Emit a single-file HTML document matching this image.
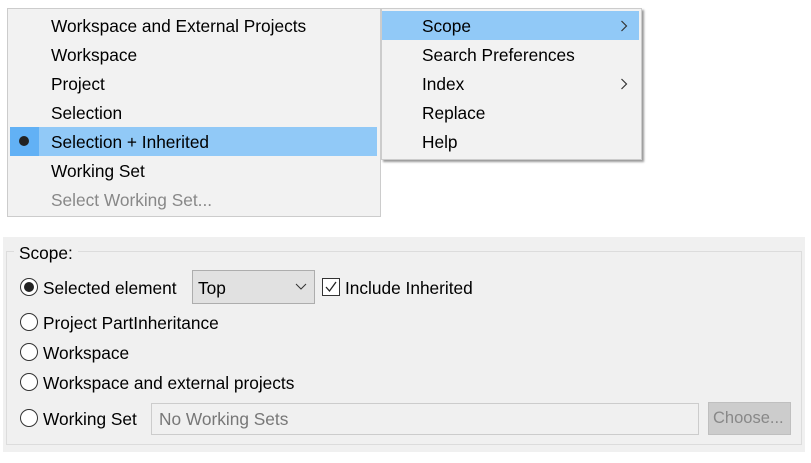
<!DOCTYPE html>
<html><head><style>
body{margin:0;width:811px;height:463px;background:#fff;position:relative;overflow:hidden;font-family:"Liberation Sans",sans-serif;font-size:17.3px;color:#000}
.a{position:absolute;white-space:nowrap}
.menu{position:absolute;background:#f2f2f2;border:1px solid #ccc}
.hl{position:absolute;background:#91c9f7}
.radio{position:absolute;width:16px;height:16px;border:1px solid #333;border-radius:50%;background:#fff}
</style></head><body>
<div class="menu" style="left:7px;top:8px;width:372px;height:207px"></div>
<div class="hl" style="left:10px;top:127px;width:367px;height:29px"></div>
<div class="a" style="left:10px;top:127px;width:29px;height:29px;background:#62b1f5"></div>
<div class="a" style="left:19px;top:136px;width:10px;height:10px;border-radius:50%;background:#222"></div>
<div class="a" style="left:51px;top:16px">Workspace and External Projects</div>
<div class="a" style="left:51px;top:45px">Workspace</div>
<div class="a" style="left:51px;top:74px">Project</div>
<div class="a" style="left:51px;top:103px">Selection</div>
<div class="a" style="left:51px;top:132px">Selection + Inherited</div>
<div class="a" style="left:51px;top:161px">Working Set</div>
<div class="a" style="left:51px;top:190px;color:#888">Select Working Set...</div>
<div class="menu" style="left:381px;top:8px;width:259px;height:150px;box-shadow:2px 2px 2px #999"></div>
<div class="hl" style="left:382px;top:11px;width:257px;height:29px"></div>
<div class="a" style="left:422px;top:16px">Scope</div>
<svg class="a" style="left:620px;top:20px" width="8" height="12"><path d="M1.5 1l5 5-5 5" stroke="#333" stroke-width="1.2" fill="none"/></svg>
<div class="a" style="left:422px;top:45px">Search Preferences</div>
<div class="a" style="left:422px;top:74px">Index</div>
<svg class="a" style="left:620px;top:78px" width="8" height="12"><path d="M1.5 1l5 5-5 5" stroke="#333" stroke-width="1.2" fill="none"/></svg>
<div class="a" style="left:422px;top:103px">Replace</div>
<div class="a" style="left:422px;top:132px">Help</div>
<div class="a" style="left:3px;top:237px;width:802px;height:215px;background:#f0f0f0"></div>
<div class="a" style="left:6px;top:251px;width:794px;height:192px;border:1px solid #dcdcdc"></div>
<div class="a" style="left:14px;top:243px;background:#f0f0f0;padding:0 5px">Scope:</div>
<div class="radio" style="left:20px;top:278px"></div>
<div class="a" style="left:24px;top:282px;width:10px;height:10px;border-radius:50%;background:#222"></div>
<div class="a" style="left:43px;top:278px">Selected element</div>
<div class="a" style="left:192px;top:270px;width:121px;height:32px;background:#e1e1e1;border:1px solid #adadad"></div>
<div class="a" style="left:198px;top:278px">Top</div>
<svg class="a" style="left:295px;top:283px" width="12" height="8"><path d="M1 1l5 5 5-5" stroke="#333" fill="none"/></svg>
<div class="a" style="left:322px;top:278px;width:16px;height:16px;border:1px solid #333;background:#fff"></div>
<svg class="a" style="left:323px;top:279px" width="16" height="16"><path d="M3 8l3.5 4L13 3" stroke="#222" stroke-width="1.3" fill="none"/></svg>
<div class="a" style="left:345px;top:278px">Include Inherited</div>
<div class="radio" style="left:20px;top:313px"></div>
<div class="a" style="left:43px;top:313px">Project PartInheritance</div>
<div class="radio" style="left:20px;top:343px"></div>
<div class="a" style="left:43px;top:343px">Workspace</div>
<div class="radio" style="left:20px;top:373px"></div>
<div class="a" style="left:43px;top:373px">Workspace and external projects</div>
<div class="radio" style="left:20px;top:409px"></div>
<div class="a" style="left:43px;top:409px">Working Set</div>
<div class="a" style="left:151px;top:403px;width:546px;height:30px;background:#f0f0f0;border:1px solid #ccc"></div>
<div class="a" style="left:159px;top:409px;color:#777">No Working Sets</div>
<div class="a" style="left:708px;top:402px;width:81px;height:31px;background:#ccc;border:1px solid #bfbfbf"></div>
<div class="a" style="left:713px;top:409px;color:#888;font-size:16.5px">Choose...</div>
</body></html>
